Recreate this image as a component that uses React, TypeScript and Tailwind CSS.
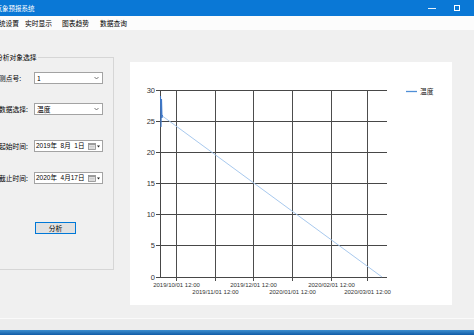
import React from "react";

const CJK = "font-['Noto_Sans_CJK_SC',sans-serif]";

function Combo({ value }: { value: string }) {
  return (
    <div className="w-[69px] h-[12px] bg-white border border-[#a3a3a3] flex items-center pl-[2px] pr-[3px]">
      <span className={`flex-1 text-[6.75px] leading-[10px] text-black ${CJK}`}>{value}</span>
      <svg width="5" height="4" viewBox="0 0 5 4">
        <polyline points="0.5,1 2.5,3 4.5,1" fill="none" stroke="#555" strokeWidth="0.8" />
      </svg>
    </div>
  );
}

function DatePick({ text }: { text: string }) {
  return (
    <div className="w-[69px] h-[12px] bg-white border border-[#a3a3a3] flex items-center pl-[1px] pr-[2px]">
      <span className={`flex-1 whitespace-pre text-[6.5px] leading-[10px] text-black font-['Liberation_Sans','Noto_Sans_CJK_SC',sans-serif]`}>
        {text}
      </span>
      <svg width="8" height="7" viewBox="0 0 8 7" className="mr-[1px]">
        <rect x="0.5" y="0.5" width="7" height="6" fill="#e8e8e8" stroke="#8a8a8a" strokeWidth="0.8" />
        <rect x="0.5" y="0.5" width="7" height="1.6" fill="#9a9a9a" />
        <line x1="1.5" y1="3.5" x2="6.5" y2="3.5" stroke="#b0b0b0" strokeWidth="0.5" />
        <line x1="1.5" y1="5" x2="6.5" y2="5" stroke="#b0b0b0" strokeWidth="0.5" />
      </svg>
      <svg width="3" height="3" viewBox="0 0 3 3">
        <polygon points="0,0.5 3,0.5 1.5,2.5" fill="#222" />
      </svg>
    </div>
  );
}

function Chart() {
  const hy = [90.5, 121.5, 152.5, 183.5, 214.5, 245.5, 277.5];
  const yl = ["30", "25", "20", "15", "10", "5", "0"];
  const vx = [176.5, 215.5, 253.5, 292.5, 331.5, 367.5];
  const xl = [
    "2019/10/01 12:00",
    "2019/11/01 12:00",
    "2019/12/01 12:00",
    "2020/01/01 12:00",
    "2020/02/01 12:00",
    "2020/03/01 12:00",
  ];
  return (
    <svg width="322" height="243" viewBox="130 62 322 243" className="block">
      {hy.map((y, i) => (
        <line key={"h" + i} x1="156" y1={y} x2="387" y2={y} stroke="#474747" strokeWidth="1" shapeRendering="crispEdges" />
      ))}
      {vx.map((x, i) => (
        <line key={"v" + i} x1={x} y1="90" x2={x} y2="281" stroke="#4d4d4d" strokeWidth="1" shapeRendering="crispEdges" />
      ))}
      <line x1="160.5" y1="90" x2="160.5" y2="278" stroke="#474747" strokeWidth="1" shapeRendering="crispEdges" />
      {hy.map((y, i) => (
        <text
          key={"yl" + i}
          x="155"
          y={y + 2.6}
          textAnchor="end"
          fontSize="7.5"
          fill="#333"
          fontFamily="'Liberation Sans', Arial, sans-serif"
        >
          {yl[i]}
        </text>
      ))}
      {vx.map((x, i) => (
        <text
          key={"xl" + i}
          x={x}
          y={i % 2 === 0 ? 286.5 : 294}
          textAnchor="middle"
          fontSize="6"
          fill="#333"
          fontFamily="'Liberation Sans', Arial, sans-serif"
        >
          {xl[i]}
        </text>
      ))}
      <line x1="161" y1="115" x2="382" y2="277" stroke="#a8c9ee" strokeWidth="1" />
      <polyline
        points="160.5,96 161,127 161.5,99 162,118 162.5,115"
        fill="none"
        stroke="#3f78c8"
        strokeWidth="1.1"
      />
      <line x1="406" y1="91.5" x2="417" y2="91.5" stroke="#4f8fd6" strokeWidth="1.3" />
      <text x="420" y="94.3" fontSize="6.75" fill="#222" fontFamily="'Noto Sans CJK SC', sans-serif">
        温度
      </text>
    </svg>
  );
}

export default function App() {
  return (
    <div className={`w-[474px] h-[335px] overflow-hidden flex flex-col bg-[#f0f0f0] ${CJK}`}>
      {/* title bar */}
      <div className="h-[16px] bg-[#0a78d6] flex items-center shrink-0">
        <span className="-ml-[4.5px] text-white text-[6.5px] leading-[8px] whitespace-nowrap">气象预报系统</span>
        <div className="ml-auto flex items-center gap-[18px] pr-[14px]">
          <div className="w-[8px] h-px bg-white opacity-90" />
          <div className="w-[6px] h-[6px] border border-white" />
        </div>
      </div>
      {/* menu bar */}
      <div className="h-[14px] bg-[#fcfcfc] flex items-center shrink-0 text-[6.75px] leading-[8px] text-black whitespace-nowrap">
        <span className="-ml-[8px]">系统设置</span>
        <span className="ml-[6px]">实时显示</span>
        <span className="ml-[10px]">图表趋势</span>
        <span className="ml-[11px]">数据查询</span>
      </div>
      {/* main */}
      <div className="h-[288px] bg-[#f0f0f0] flex items-start shrink-0">
        <div className="-ml-[10px] mt-[23px] w-[124px] flex flex-col shrink-0">
          <div className="flex h-[8px]">
            <span className="pl-[6px] pr-[1px] text-[6.75px] leading-[8px] whitespace-nowrap text-black">分析对象选择</span>
            <div className="flex-1 mt-[4px] border-t border-r border-[#d6d6d6]" />
          </div>
          <div className="h-[209px] border-r border-b border-[#d6d6d6] flex flex-col pl-[9px] text-[6.75px] leading-[8px] text-black">
            <div className="mt-[11px] flex items-center h-[12px]">
              <span className="w-[35px] whitespace-nowrap">测点号:</span>
              <Combo value="1" />
            </div>
            <div className="mt-[19px] flex items-center h-[12px]">
              <span className="w-[35px] whitespace-nowrap">数据选择:</span>
              <Combo value="温度" />
            </div>
            <div className="mt-[25px] flex items-center h-[12px]">
              <span className="w-[35px] whitespace-nowrap">起始时间:</span>
              <DatePick text="2019年  8月  1日" />
            </div>
            <div className="mt-[20px] flex items-center h-[12px]">
              <span className="w-[35px] whitespace-nowrap">截止时间:</span>
              <DatePick text="2020年  4月17日" />
            </div>
            <div className="mt-[38px] ml-[36px] w-[41px] h-[12px] border border-[#0078d7] bg-[#e1e1e1] flex items-center justify-center">
              <span className="text-[6.75px] leading-[8px]">分析</span>
            </div>
          </div>
        </div>
        <div className="ml-[16px] mt-[32px] w-[322px] h-[243px] bg-white shrink-0">
          <Chart />
        </div>
      </div>
      {/* status strip */}
      <div className="h-[12px] border-t border-[#fafafa] bg-[#ededed] shrink-0" />
      {/* taskbar */}
      <div className="h-[5px] bg-linear-to-b from-[#3d8fd0] to-[#0f5ca6] shrink-0" />
    </div>
  );
}
